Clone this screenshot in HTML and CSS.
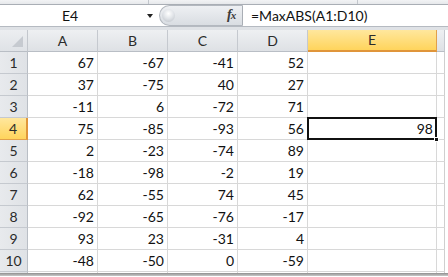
FILE: index.html
```html
<!DOCTYPE html>
<html>
<head>
<meta charset="utf-8">
<link rel="stylesheet" href="styles.css">
</head>
<body>
<div class="window">
  <div class="ribbon-edge"><span class="tick t1"></span><span class="tick t2"></span></div>
  <div class="fbar">
    <div class="namebox"><span class="name">E4</span><span class="dd"></span></div>
    <div class="grip"><span class="dimple"></span><span class="fx"><i>f</i><i class="x">x</i></span></div>
    <div class="formula">=MaxABS(A1:D10)</div>
  </div>
  <div class="gap"></div>
  <div class="sheet">
    <div class="corner"><span class="tri"></span></div>
    <div class="ch">A</div><div class="ch">B</div><div class="ch">C</div><div class="ch">D</div><div class="ch sel">E</div><div class="ch rest"></div>

    <div class="rh">1</div><div class="c">67</div><div class="c">-67</div><div class="c">-41</div><div class="c">52</div><div class="c"></div><div class="c rest"></div>
    <div class="rh">2</div><div class="c">37</div><div class="c">-75</div><div class="c">40</div><div class="c">27</div><div class="c"></div><div class="c rest"></div>
    <div class="rh">3</div><div class="c">-11</div><div class="c">6</div><div class="c">-72</div><div class="c">71</div><div class="c"></div><div class="c rest"></div>
    <div class="rh sel">4</div><div class="c">75</div><div class="c">-85</div><div class="c">-93</div><div class="c">56</div><div class="c active">98<span class="handle"></span></div><div class="c rest"></div>
    <div class="rh">5</div><div class="c">2</div><div class="c">-23</div><div class="c">-74</div><div class="c">89</div><div class="c"></div><div class="c rest"></div>
    <div class="rh">6</div><div class="c">-18</div><div class="c">-98</div><div class="c">-2</div><div class="c">19</div><div class="c"></div><div class="c rest"></div>
    <div class="rh">7</div><div class="c">62</div><div class="c">-55</div><div class="c">74</div><div class="c">45</div><div class="c"></div><div class="c rest"></div>
    <div class="rh">8</div><div class="c">-92</div><div class="c">-65</div><div class="c">-76</div><div class="c">-17</div><div class="c"></div><div class="c rest"></div>
    <div class="rh">9</div><div class="c">93</div><div class="c">23</div><div class="c">-31</div><div class="c">4</div><div class="c"></div><div class="c rest"></div>
    <div class="rh">10</div><div class="c">-48</div><div class="c">-50</div><div class="c">0</div><div class="c">-59</div><div class="c"></div><div class="c rest"></div>
    <div class="rh"></div><div class="c"></div><div class="c"></div><div class="c"></div><div class="c"></div><div class="c"></div><div class="c rest"></div>
  </div>
  <div class="shadow"></div>
</div>
</body>
</html>
```

FILE: styles.css
```css
* { box-sizing: border-box; margin: 0; padding: 0; }
html, body { background: #ffffff; }
body { width: 448px; height: 277px; overflow: hidden; font-family: Lato, "Open Sans", sans-serif; font-size: 14px; color: #111; }

.window { width: 448px; height: 277px; display: flex; flex-direction: column; }

.ribbon-edge { height: 5px; background: linear-gradient(#f2f3f5, #e6e8eb); border-bottom: 1px solid #a9aeb5; position: relative; flex: none; }
.tick { position: absolute; top: 0; width: 1px; height: 4px; background: #c2c6cc; }
.t1 { left: 148px; }
.t2 { left: 357px; }

.fbar { height: 21px; display: flex; flex: none; background: #ffffff; }
.namebox { width: 159px; display: flex; align-items: center; position: relative; }
.name { width: 140px; text-align: center; line-height: 21px; color: #111; }
.dd { position: absolute; left: 147px; top: 9px; width: 0; height: 0; border-left: 3.5px solid transparent; border-right: 3.5px solid transparent; border-top: 4px solid #222; }

.grip { width: 84px; height: 21px; position: relative; background: linear-gradient(#eef0f3, #d9dde2); border-radius: 11px 0 0 11px; border: 1px solid #b3b8bf; border-right: 1px solid #a9aeb5; display: flex; align-items: center; }
.dimple { position: absolute; left: 2px; top: 3px; width: 13px; height: 13px; border-radius: 50%; background: radial-gradient(circle at 50% 35%, #ffffff 0%, #e2e5e9 45%, #b9bec5 100%); }
.fx { position: absolute; left: 67px; top: 1px; font-family: "Liberation Serif", serif; font-size: 14px; color: #3a3a3a; font-weight: bold; letter-spacing: -1px; }
.fx .x { font-size: 11px; }

.formula { flex: 1; padding-left: 8px; line-height: 21px; color: #111; }

.gap { height: 4px; flex: none; background: #dfe2e6; border-top: 1px solid #b5bac1; }

.sheet { display: grid; grid-template-columns: 28px 70px 70px 70px 70px 129px 8px; grid-template-rows: 22px repeat(10, 22px) 2px; flex: none; height: 243px; overflow: hidden; }

.corner { background: linear-gradient(#eceef1, #dfe2e6); border-right: 1px solid #c3c7cd; border-bottom: 1px solid #b9bec5; position: relative; }
.tri { position: absolute; right: 4px; bottom: 4px; width: 0; height: 0; border-left: 11px solid transparent; border-bottom: 11px solid #c6cad0; }

.ch { background: linear-gradient(#eef0f2, #dee1e5); border-right: 1px solid #c5c9cf; border-bottom: 1px solid #b9bec5; text-align: center; line-height: 21px; color: #2b2b2b; }
.ch.sel { background: linear-gradient(#ffe79d, #ffd45c); border-right: 1px solid #e2a04a; border-bottom: 2px solid #e0953a; line-height: 20px; }
.ch.rest { border-right: 1px solid #c5c9cf; }

.rh { background: linear-gradient(90deg, #e8eaed, #dfe2e6); border-right: 1px solid #b9bec5; border-bottom: 1px solid #c5c9cf; text-align: center; line-height: 21px; color: #2b2b2b; }
.rh.sel { background: linear-gradient(#ffe79d, #ffd45c); border-right: 2px solid #e0953a; border-bottom: 1px solid #e2a04a; }

.c { border-right: 1px solid #d8d8d8; border-bottom: 1px solid #d8d8d8; text-align: right; padding-right: 3px; line-height: 21px; position: relative; }
.c.rest { padding: 0; border-right: 1px solid #cfcfcf; }
.c.active { z-index: 2; }
.c.active::before { content: ""; position: absolute; left: -1px; top: -1px; right: -1px; bottom: -1px; border: 2px solid #111; }
.handle { position: absolute; right: -3px; bottom: -3px; width: 5px; height: 5px; background: #111; border: 1px solid #fff; z-index: 3; }

.shadow { height: 3px; flex: none; background: linear-gradient(#8f8f8f, #c9c9c9); width: 448px; }
```
